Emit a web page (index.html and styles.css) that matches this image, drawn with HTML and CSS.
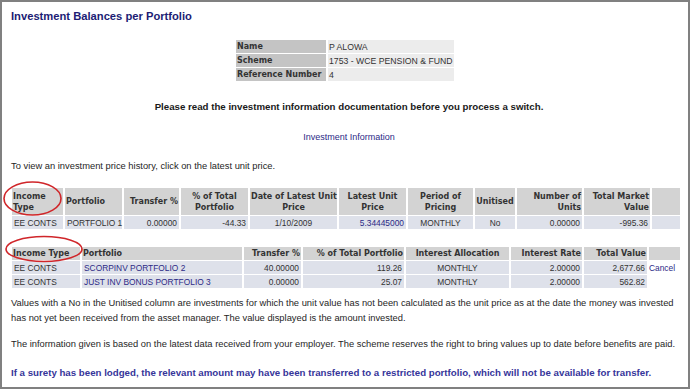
FILE: index.html
```html
<!DOCTYPE html>
<html lang="en">
<head>
    <meta charset="UTF-8">
    <title>Investment Balances per Portfolio</title>
    <link rel="stylesheet" href="styles.css">
</head>
<body>
    <div class="frame">
        <h1 class="page-title">Investment Balances per Portfolio</h1>

        <table class="member-info">
            <tr><th>Name</th><td>P ALOWA</td></tr>
            <tr><th>Scheme</th><td>1753 - WCE PENSION &amp; FUND</td></tr>
            <tr><th>Reference Number</th><td>4</td></tr>
        </table>

        <p class="notice">Please read the investment information documentation before you process a switch.</p>
        <p class="info-link"><a href="#">Investment Information</a></p>
        <p class="hint">To view an investment price history, click on the latest unit price.</p>

        <table class="grid unit-grid">
            <colgroup>
                <col style="width:51px"><col style="width:57px"><col style="width:55px"><col style="width:67px">
                <col style="width:87px"><col style="width:67px"><col style="width:65px"><col style="width:40px">
                <col style="width:65px"><col style="width:66px"><col>
            </colgroup>
            <thead>
                <tr>
                    <th class="l">Income<br>Type</th>
                    <th class="l">Portfolio</th>
                    <th class="r">Transfer %</th>
                    <th class="c">% of Total<br>Portfolio</th>
                    <th class="c">Date of Latest Unit<br>Price</th>
                    <th class="c">Latest Unit<br>Price</th>
                    <th class="c">Period of<br>Pricing</th>
                    <th class="c">Unitised</th>
                    <th class="r">Number of<br>Units</th>
                    <th class="r">Total Market<br>Value</th>
                    <th></th>
                </tr>
            </thead>
            <tbody>
                <tr>
                    <td class="l">EE CONTS</td>
                    <td class="l">PORTFOLIO 1</td>
                    <td class="r">0.00000</td>
                    <td class="r">-44.33</td>
                    <td class="c">1/10/2009</td>
                    <td class="r"><a href="#">5.34445000</a></td>
                    <td class="c">MONTHLY</td>
                    <td class="c">No</td>
                    <td class="r">0.00000</td>
                    <td class="r">-995.36</td>
                    <td></td>
                </tr>
            </tbody>
        </table>

        <table class="grid switch-grid">
            <colgroup>
                <col style="width:68px"><col style="width:160px"><col style="width:57px"><col style="width:101px">
                <col style="width:103px"><col style="width:71px"><col style="width:63px"><col>
            </colgroup>
            <thead>
                <tr>
                    <th class="l">Income Type</th>
                    <th class="l">Portfolio</th>
                    <th class="r">Transfer %</th>
                    <th class="r">% of Total Portfolio</th>
                    <th class="c">Interest Allocation</th>
                    <th class="r">Interest Rate</th>
                    <th class="r">Total Value</th>
                    <th></th>
                </tr>
            </thead>
            <tbody>
                <tr>
                    <td class="l">EE CONTS</td>
                    <td class="l"><a href="#">SCORPINV PORTFOLIO 2</a></td>
                    <td class="r">40.00000</td>
                    <td class="r">119.26</td>
                    <td class="c">MONTHLY</td>
                    <td class="r">2.00000</td>
                    <td class="r">2,677.66</td>
                    <td class="action"><a href="#">Cancel</a></td>
                </tr>
                <tr>
                    <td class="l">EE CONTS</td>
                    <td class="l"><a href="#">JUST INV BONUS PORTFOLIO 3</a></td>
                    <td class="r">0.00000</td>
                    <td class="r">25.07</td>
                    <td class="c">MONTHLY</td>
                    <td class="r">2.00000</td>
                    <td class="r">562.82</td>
                    <td class="action"></td>
                </tr>
            </tbody>
        </table>

        <p class="note">Values with a No in the Unitised column are investments for which the unit value has not been calculated as the unit price as at the date the money was invested has not yet been received from the asset manager. The value displayed is the amount invested.</p>
        <p class="note">The information given is based on the latest data received from your employer. The scheme reserves the right to bring values up to date before benefits are paid.</p>
        <p class="surety">If a surety has been lodged, the relevant amount may have been transferred to a restricted portfolio, which will not be available for transfer.</p>

        <!-- hand-drawn rings around the Income Type headings -->
        <svg class="marks" width="690" height="389" viewBox="0 0 690 389">
            <ellipse cx="32.5" cy="198.5" rx="28.5" ry="16.5" />
            <ellipse cx="44" cy="249" rx="38" ry="12.5" />
        </svg>
    </div>
</body>
</html>
```

FILE: styles.css
```css
* {
    margin: 0;
    padding: 0;
    box-sizing: border-box;
}

body {
    background: white;
    font-family: "Liberation Sans", Arial, sans-serif;
    font-size: 9.35px;
    color: #262626;
}

a {
    color: #2c2a86;
    text-decoration: none;
}

.frame {
    position: relative;
    width: 690px;
    height: 389px;
    border: 2px solid #808080;
    padding: 7px 0 0 8px;
}

.page-title {
    margin-left: 1px;
    font-size: 11.2px;
    font-weight: bold;
    color: #201c74;
    line-height: 14px;
}

/* name / scheme block */
.member-info {
    margin: 16px 0 0 224px;
    border-spacing: 2px 1px;
}

.member-info th,
.member-info td {
    height: 13px;
    padding: 0 1px;
    text-align: left;
    white-space: nowrap;
}

.member-info th {
    width: 90px;
    background: #c4c4c4;
    font-family: "DejaVu Sans", Verdana, sans-serif;
    font-size: 8px;
    color: #333;
}

.member-info td {
    width: 125px;
    background: #ececec;
    font-size: 8.7px;
    color: #333;
}

.notice {
    margin-top: 19px;
    text-align: center;
    font-weight: bold;
    font-size: 9.7px;
    line-height: 12px;
    color: #1a1a1a;
}

.info-link {
    margin-top: 18px;
    text-align: center;
    font-size: 9px;
    line-height: 12px;
}

.hint {
    margin: 17px 0 0 1px;
    line-height: 12px;
}

/* balance tables */
.grid {
    table-layout: fixed;
    width: 672px;
    border-spacing: 2px 1px;
}

.grid th {
    background: #d3d3d3;
    font-family: "DejaVu Sans", Verdana, sans-serif;
    font-size: 8px;
    font-weight: bold;
    color: #333;
    line-height: 11px;
    padding: 0 1px;
    vertical-align: middle;
    white-space: nowrap;
}

.grid td {
    background: #dee1ea;
    height: 13px;
    padding: 0 2px;
    font-size: 8.4px;
    color: #333;
    white-space: nowrap;
}

.grid .l { text-align: left; }
.grid .r { text-align: right; }
.grid .c { text-align: center; }

.unit-grid {
    margin-top: 15px;
}

.unit-grid th {
    height: 27px;
}

.switch-grid {
    margin-top: 16px;
}

.switch-grid th {
    height: 13px;
}

.switch-grid .action {
    background: white;
    padding: 0;
}

.note {
    margin: 7px 8px 0 1px;
    line-height: 15px;
}

.note + .note {
    margin-top: 11px;
}

.surety {
    margin: 15px 0 0 1px;
    font-size: 9.7px;
    font-weight: bold;
    line-height: 12px;
    color: #36359a;
}

.marks {
    position: absolute;
    left: -2px;
    top: -2px;
    pointer-events: none;
}

.marks ellipse {
    fill: none;
    stroke: #d0262a;
    stroke-width: 1.6;
}
```
